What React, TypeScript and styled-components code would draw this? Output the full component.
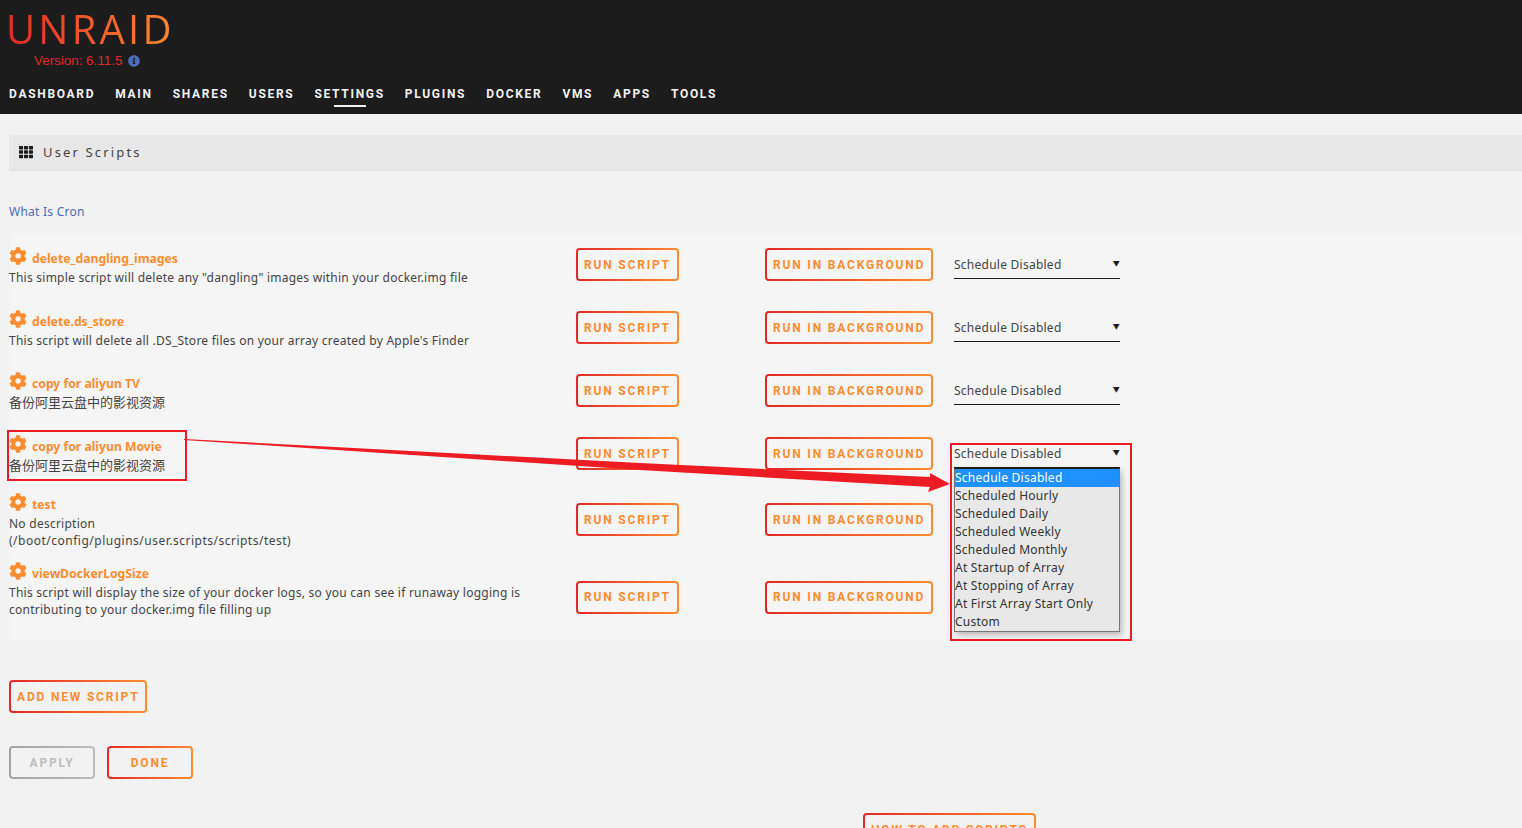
import React from 'react'
import styled, { createGlobalStyle } from 'styled-components'
import { FaCog, FaInfoCircle, FaTh } from 'react-icons/fa'

const bodyFont = `"Noto Sans", "Noto Sans CJK SC", sans-serif`
const labelFont = `Roboto, "Noto Sans", sans-serif`

const GlobalStyle = createGlobalStyle`
  html, body {
    margin: 0;
    padding: 0;
    height: 828px;
    overflow: hidden;
    background: #f2f2f2;
    font-family: ${bodyFont};
    color: #444;
  }
`

const Page = styled.div`
  position: relative;
  width: 1522px;
  height: 828px;
  overflow: hidden;
`

const Header = styled.header`
  height: 114px;
  box-sizing: border-box;
  background: #1c1c1c;
  padding: 9px 0 0 9px;
`

const Logo = styled.div`
  width: 172px;
  height: 40px;
  margin-left: -3px;
  font-family: "Open Sans", sans-serif;
  font-size: 40px;
  font-weight: 400;
  line-height: 40px;
  letter-spacing: 3.2px;
  background: linear-gradient(90deg, #e22828, #ff8c2f);
  -webkit-background-clip: text;
  background-clip: text;
  color: transparent;
`

const VersionRow = styled.div`
  display: flex;
  align-items: center;
  gap: 6px;
  margin: 4px 0 0 25px;
  height: 15px;
  font-family: "Liberation Sans", sans-serif;
  font-size: 13.4px;
  color: #e22828;
`

const Nav = styled.nav`
  display: flex;
  gap: 20px;
  margin-top: 18px;
`

const NavItem = styled.a<{ $active?: boolean }>`
  position: relative;
  font-family: ${labelFont};
  font-size: 12px;
  font-weight: 700;
  line-height: 16px;
  letter-spacing: 1.7px;
  color: #f2f2f2;
  &::after {
    content: '';
    display: ${(p) => (p.$active ? 'block' : 'none')};
    position: absolute;
    left: 20px;
    bottom: -5px;
    width: 32px;
    height: 2px;
    background: #f2f2f2;
  }
`

const Content = styled.main`
  padding: 21px 0 0 9px;
`

const TitleBar = styled.div`
  display: flex;
  align-items: center;
  gap: 10px;
  height: 36px;
  padding: 0 0 2px 10px;
  background: #e8e8e8;
  border-bottom: 1px solid #e3e3e3;
  box-sizing: border-box;
  font-size: 13px;
  letter-spacing: 2.15px;
  color: #444;
`

const CronLink = styled.a`
  display: block;
  margin-top: 32px;
  height: 18px;
  font-size: 12px;
  line-height: 18px;
  letter-spacing: 0.25px;
  color: #486dba;
`

const ScriptTable = styled.div`
  margin-top: 12px;
  background: #f5f5f5;
`

const ScriptRow = styled.div<{ $height: number }>`
  display: grid;
  grid-template-columns: 567px 189px 189px 166px;
  align-items: center;
  height: ${(p) => p.$height}px;
`

const ScriptInfo = styled.div<{ $top: number }>`
  align-self: start;
  display: flex;
  flex-direction: column;
  padding-top: ${(p) => p.$top}px;
`

const ScriptName = styled.div`
  display: flex;
  align-items: center;
  gap: 5px;
  height: 20px;
  font-size: 12.2px;
  font-weight: 700;
  color: #ff8c2f;
  svg {
    margin-top: -4px;
  }
`

const Description = styled.div<{ $cjk?: boolean }>`
  font-size: ${(p) => (p.$cjk ? 13 : 12)}px;
  line-height: 17px;
  letter-spacing: ${(p) => (p.$cjk ? 0 : 0.25)}px;
  color: #444;
  margin-top: 1px;
`

const PathLine = styled.div`
  letter-spacing: 0.5px;
`

const ActionButton = styled.button<{ $disabled?: boolean }>`
  justify-self: start;
  height: 33px;
  box-sizing: border-box;
  padding: 0 6px;
  border: 2px solid transparent;
  border-radius: 4px;
  background: linear-gradient(#f5f5f5, #f5f5f5) padding-box,
    ${(p) =>
      p.$disabled
        ? 'linear-gradient(90deg, #a3a3a3, #bdbdbd) border-box'
        : 'linear-gradient(90deg, #e22828, #ff8c2f) border-box'};
  font-family: ${labelFont};
  font-size: 12px;
  font-weight: 700;
  letter-spacing: 1.82px;
  white-space: nowrap;
  color: ${(p) => (p.$disabled ? '#bdbdbd' : '#ff8c2f')};
`

const PageButton = styled(ActionButton)`
  background: linear-gradient(#f2f2f2, #f2f2f2) padding-box,
    ${(p) =>
      p.$disabled
        ? 'linear-gradient(90deg, #a3a3a3, #bdbdbd) border-box'
        : 'linear-gradient(90deg, #e22828, #ff8c2f) border-box'};
`

const WideButton = styled(PageButton)<{ $width: number }>`
  width: ${(p) => p.$width}px;
  padding: 0;
`

const ScheduleCell = styled.div`
  position: relative;
  align-self: start;
  margin-top: 23px;
`

const Select = styled.div`
  display: flex;
  align-items: center;
  justify-content: space-between;
  height: 23px;
  padding-bottom: 5px;
  box-sizing: border-box;
  border-bottom: 1px solid #1c1c1c;
  font-size: 12px;
  letter-spacing: 0.25px;
  color: #444;
`

const Caret = styled.span`
  margin: -3px 0 0 0;
  font-size: 7px;
  color: #1c1c1c;
`

const OptionList = styled.ul`
  position: absolute;
  z-index: 2;
  top: 23px;
  left: 0;
  width: 100%;
  box-sizing: border-box;
  margin: 0;
  padding: 0;
  list-style: none;
  background: #e8e8e8;
  border: 1px solid #767676;
  border-top-color: #1c1c1c;
  box-shadow: 2px 3px 6px rgba(0, 0, 0, 0.25);
`

const Option = styled.li<{ $selected?: boolean }>`
  height: 18px;
  font-size: 12px;
  line-height: 18px;
  letter-spacing: 0.25px;
  white-space: nowrap;
  color: ${(p) => (p.$selected ? '#fff' : '#333')};
  background: ${(p) => (p.$selected ? '#1e90ff' : 'transparent')};
`

const AddRow = styled.div`
  margin-top: 40px;
`

const FormRow = styled.div`
  display: flex;
  gap: 12px;
  margin-top: 33px;
`

const HelpRow = styled.div`
  margin: 34px 0 0 854px;
`

const Highlight = styled.div<{ $x: number; $y: number; $w: number; $h: number }>`
  position: absolute;
  z-index: 3;
  left: ${(p) => p.$x}px;
  top: ${(p) => p.$y}px;
  width: ${(p) => p.$w}px;
  height: ${(p) => p.$h}px;
  box-sizing: border-box;
  border: 2px solid #ed1c24;
`

const ArrowLayer = styled.svg`
  position: absolute;
  z-index: 3;
  left: 0;
  top: 0;
  pointer-events: none;
`

const cjkDesc = '备份阿里云盘中的影视资源'

const scripts = [
  { name: 'delete_dangling_images', height: 63, top: 15, desc: ['This simple script will delete any "dangling" images within your docker.img file'] },
  { name: 'delete.ds_store', height: 63, top: 15, desc: ["This script will delete all .DS_Store files on your array created by Apple's Finder"] },
  { name: 'copy for aliyun TV', height: 63, top: 14, desc: [cjkDesc], cjk: true },
  { name: 'copy for aliyun Movie', height: 63, top: 14, desc: [cjkDesc], cjk: true, open: true },
  { name: 'test', height: 69, top: 9, desc: ['No description'], path: '(/boot/config/plugins/user.scripts/scripts/test)', noSelect: true },
  {
    name: 'viewDockerLogSize',
    height: 86,
    top: 9,
    desc: [
      'This script will display the size of your docker logs, so you can see if runaway logging is',
      'contributing to your docker.img file filling up',
    ],
    noSelect: true,
  },
]

const navItems = ['DASHBOARD', 'MAIN', 'SHARES', 'USERS', 'SETTINGS', 'PLUGINS', 'DOCKER', 'VMS', 'APPS', 'TOOLS']

const scheduleOptions = [
  'Schedule Disabled',
  'Scheduled Hourly',
  'Scheduled Daily',
  'Scheduled Weekly',
  'Scheduled Monthly',
  'At Startup of Array',
  'At Stopping of Array',
  'At First Array Start Only',
  'Custom',
]

function App(): JSX.Element {
  return (
    <Page>
      <GlobalStyle />
      <Header>
        <Logo>UNRAID</Logo>
        <VersionRow>
          Version: 6.11.5
          <FaInfoCircle size={12} color="#486dba" />
        </VersionRow>
        <Nav>
          {navItems.map((item) => (
            <NavItem key={item} $active={item === 'SETTINGS'}>
              {item}
            </NavItem>
          ))}
        </Nav>
      </Header>

      <Content>
        <TitleBar>
          <FaTh size={14} color="#1c1c1c" />
          User Scripts
        </TitleBar>
        <CronLink>What Is Cron</CronLink>

        <ScriptTable>
          {scripts.map((script) => (
            <ScriptRow key={script.name} $height={script.height}>
              <ScriptInfo $top={script.top}>
                <ScriptName>
                  <FaCog size={18} color="#ff8c2f" />
                  {script.name}
                </ScriptName>
                <Description $cjk={script.cjk}>
                  {script.desc.map((line) => (
                    <div key={line}>{line}</div>
                  ))}
                  {script.path && <PathLine>{script.path}</PathLine>}
                </Description>
              </ScriptInfo>
              <ActionButton>RUN SCRIPT</ActionButton>
              <ActionButton>RUN IN BACKGROUND</ActionButton>
              {!script.noSelect && (
                <ScheduleCell>
                  <Select>
                    Schedule Disabled
                    <Caret>▼</Caret>
                  </Select>
                  {script.open && (
                    <OptionList>
                      {scheduleOptions.map((option, i) => (
                        <Option key={option} $selected={i === 0}>
                          {option}
                        </Option>
                      ))}
                    </OptionList>
                  )}
                </ScheduleCell>
              )}
            </ScriptRow>
          ))}
        </ScriptTable>

        <AddRow>
          <PageButton>ADD NEW SCRIPT</PageButton>
        </AddRow>
        <FormRow>
          <WideButton $disabled $width={86}>
            APPLY
          </WideButton>
          <WideButton $width={86}>DONE</WideButton>
        </FormRow>
        <HelpRow>
          <PageButton>HOW TO ADD SCRIPTS</PageButton>
        </HelpRow>
      </Content>

      <Highlight $x={7} $y={430} $w={180} $h={51} />
      <Highlight $x={950} $y={443} $w={182} $h={198} />
      <ArrowLayer width={1522} height={828} viewBox="0 0 1522 828">
        <polygon
          points="184,439 640,463 930,477 930,473 950,484 928,492 930,487 640,470 184,440"
          fill="#ed1c24"
        />
      </ArrowLayer>
    </Page>
  )
}

export default App
